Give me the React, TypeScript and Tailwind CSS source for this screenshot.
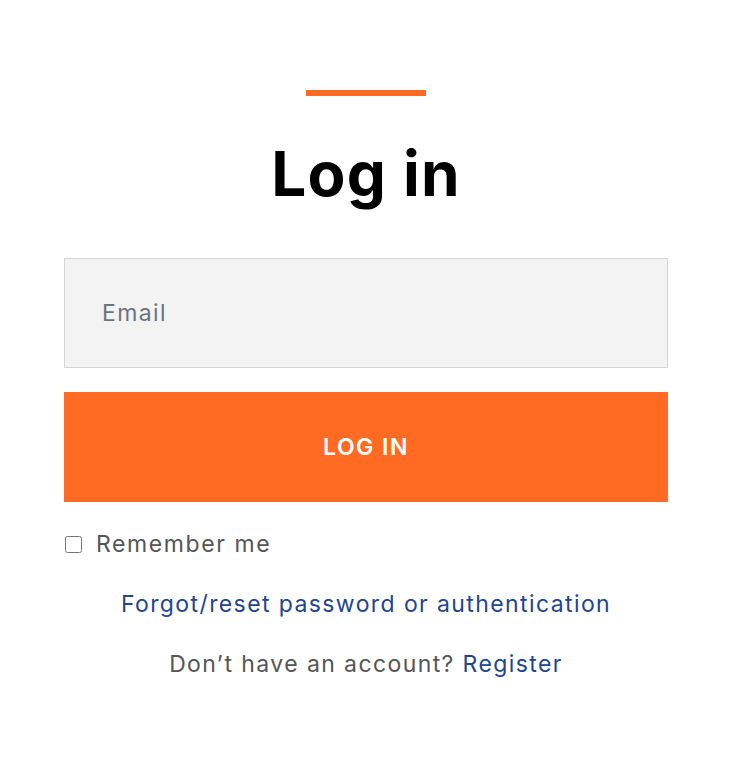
export default function App() {
  return (
    <div className="min-h-screen bg-white pl-[2px]" style={{ fontFamily: 'Inter, "Open Sans", sans-serif' }}>
      <div className="mx-auto flex w-[604px] flex-col items-center pt-[90px]">
        <div className="h-[6px] w-[120px] bg-[#ff6b22]" />
        <h1 className="mt-[38px] text-[62px] font-bold leading-[80px] tracking-[1.2px] text-black">Log in</h1>

        <form className="mt-[44px] flex w-full flex-col" onSubmit={(e) => e.preventDefault()}>
          <input
            type="email"
            placeholder="Email"
            className="h-[110px] w-full border border-[#d6d6d6] bg-[#f3f3f3] px-[37px] text-[23px] tracking-[1.4px] text-[#333] placeholder-[#6b737b] outline-none"
          />
          <button
            type="submit"
            className="mt-[24px] h-[110px] w-full bg-[#ff6b22] text-[23px] font-semibold tracking-[1.5px] text-white"
          >
            LOG IN
          </button>

          <label className="mt-[26px] flex items-center gap-[14px] pl-[1px] text-[23px] leading-[33px] tracking-[1.6px] text-[#555]">
            <input type="checkbox" className="h-[17px] w-[17px] rounded-[3px] accent-[#555]" />
            Remember me
          </label>
        </form>

        <a href="#" className="mt-[27px] text-[23px] leading-[33px] tracking-[1.4px] text-[#22458f]">
          Forgot/reset password or authentication
        </a>
        <p className="mt-[27px] text-[23px] leading-[33px] tracking-[1.4px] text-[#555]">
          Don’t have an account? <a href="#" className="text-[#22458f]">Register</a>
        </p>
      </div>
    </div>
  );
}
